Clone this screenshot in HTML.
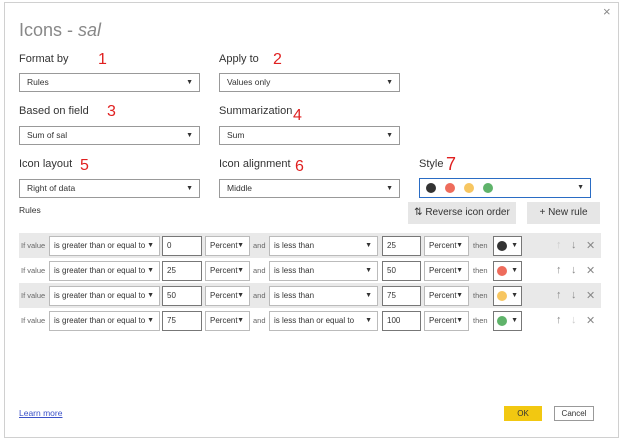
<!DOCTYPE html>
<html><head><meta charset="utf-8">
<style>
*{box-sizing:border-box;margin:0;padding:0}
body{width:624px;height:441px;background:#fff;font-family:"Liberation Sans",sans-serif;position:relative;overflow:hidden;color:#333}
.dlg{position:absolute;left:4px;top:2px;width:615px;height:436px;border:1px solid #d0d0d0;background:#fff}
.a{position:absolute;white-space:nowrap}
.title{left:19px;top:20px;font-size:18px;color:#888;font-weight:300}
.lbl{font-size:11px;color:#333}
.sel{position:absolute;height:19px;border:1px solid #999;background:#fff;font-size:8.5px;line-height:17px;padding-left:7px;color:#333}
.sel .ar{position:absolute;right:6px;top:0;font-size:7px}
.red{position:absolute;color:#e02020;font-family:"Liberation Sans",sans-serif;font-size:16px}
.row{position:absolute;left:19px;width:582px;height:25px}
.g{background:#e9e9e9}
.s{position:absolute;top:3px;height:20px;border:1px solid #bbb;background:#fff;font-size:8px;line-height:18px;padding-left:4px}
.s .ar{position:absolute;right:5px;top:0;font-size:7px}
.in{border-color:#777}
.t{position:absolute;top:8px;font-size:7.5px;color:#666}
.dot{display:inline-block;width:10px;height:10px;border-radius:50%;vertical-align:middle}
.ic{position:absolute;top:6px;font-size:11px;color:#888}
.btn{position:absolute;background:#e6e6e6;font-size:10px;color:#333;text-align:center;line-height:22px}
</style></head><body>
<div class="dlg"></div>
<div class="a" style="left:603px;top:4px;font-size:13px;color:#888">×</div>
<div class="a title">Icons - <i>sal</i></div>

<div class="a lbl" style="left:19px;top:53px">Format by</div>
<div class="red" style="left:98px;top:51px">1</div>
<div class="sel" style="left:19px;top:73px;width:181px">Rules<span class="ar">▼</span></div>
<div class="a lbl" style="left:219px;top:53px">Apply to</div>
<div class="red" style="left:273px;top:51px">2</div>
<div class="sel" style="left:219px;top:73px;width:181px">Values only<span class="ar">▼</span></div>

<div class="a lbl" style="left:19px;top:105px">Based on field</div>
<div class="red" style="left:107px;top:103px">3</div>
<div class="sel" style="left:19px;top:126px;width:181px">Sum of sal<span class="ar">▼</span></div>
<div class="a lbl" style="left:219px;top:105px">Summarization</div>
<div class="red" style="left:293px;top:107px">4</div>
<div class="sel" style="left:219px;top:126px;width:181px">Sum<span class="ar">▼</span></div>

<div class="a lbl" style="left:19px;top:158px">Icon layout</div>
<div class="red" style="left:80px;top:157px">5</div>
<div class="sel" style="left:19px;top:179px;width:181px">Right of data<span class="ar">▼</span></div>
<div class="a lbl" style="left:219px;top:158px">Icon alignment</div>
<div class="red" style="left:295px;top:158px">6</div>
<div class="sel" style="left:219px;top:179px;width:181px">Middle<span class="ar">▼</span></div>

<div class="a lbl" style="left:419px;top:158px">Style</div>
<div class="red" style="left:446px;top:154px;font-size:18px">7</div>
<div class="sel" style="left:419px;top:178px;width:172px;height:20px;border-color:#2a6cc4;padding-left:6px">
<span class="dot" style="background:#333"></span><span class="dot" style="background:#ee6c5c;margin-left:9px"></span><span class="dot" style="background:#f7c661;margin-left:9px"></span><span class="dot" style="background:#5fb36a;margin-left:9px"></span><span class="ar">▼</span></div>
<div class="btn" style="left:408px;top:202px;width:108px">⇅ Reverse icon order</div>
<div class="btn" style="left:527px;top:202px;width:73px">+ New rule</div>

<div class="a" style="left:19px;top:205px;font-size:8.5px;color:#333">Rules</div>

<div class="row g" style="top:233px">
<div class="t" style="left:2px">If value</div>
<div class="s" style="left:30px;width:111px">is greater than or equal to<span class="ar">▼</span></div>
<div class="s in" style="left:143px;width:40px">0</div>
<div class="s" style="left:186px;width:45px">Percent<span class="ar">▼</span></div>
<div class="t" style="left:234px">and</div>
<div class="s" style="left:250px;width:109px">is less than<span class="ar">▼</span></div>
<div class="s in" style="left:363px;width:39px">25</div>
<div class="s" style="left:405px;width:45px">Percent<span class="ar">▼</span></div>
<div class="t" style="left:454px">then</div>
<div class="s in" style="left:474px;width:29px;padding-left:3px"><span class="dot" style="background:#333"></span><span class="ar" style="right:3px">▼</span></div>
<div class="ic" style="left:537px;color:#ccc">↑</div><div class="ic" style="left:552px">↓</div><div class="ic" style="left:567px">✕</div>
</div>
<div class="row" style="top:258px">
<div class="t" style="left:2px">If value</div>
<div class="s" style="left:30px;width:111px">is greater than or equal to<span class="ar">▼</span></div>
<div class="s in" style="left:143px;width:40px">25</div>
<div class="s" style="left:186px;width:45px">Percent<span class="ar">▼</span></div>
<div class="t" style="left:234px">and</div>
<div class="s" style="left:250px;width:109px">is less than<span class="ar">▼</span></div>
<div class="s in" style="left:363px;width:39px">50</div>
<div class="s" style="left:405px;width:45px">Percent<span class="ar">▼</span></div>
<div class="t" style="left:454px">then</div>
<div class="s in" style="left:474px;width:29px;padding-left:3px"><span class="dot" style="background:#ee6c5c"></span><span class="ar" style="right:3px">▼</span></div>
<div class="ic" style="left:537px">↑</div><div class="ic" style="left:552px">↓</div><div class="ic" style="left:567px">✕</div>
</div>
<div class="row g" style="top:283px">
<div class="t" style="left:2px">If value</div>
<div class="s" style="left:30px;width:111px">is greater than or equal to<span class="ar">▼</span></div>
<div class="s in" style="left:143px;width:40px">50</div>
<div class="s" style="left:186px;width:45px">Percent<span class="ar">▼</span></div>
<div class="t" style="left:234px">and</div>
<div class="s" style="left:250px;width:109px">is less than<span class="ar">▼</span></div>
<div class="s in" style="left:363px;width:39px">75</div>
<div class="s" style="left:405px;width:45px">Percent<span class="ar">▼</span></div>
<div class="t" style="left:454px">then</div>
<div class="s in" style="left:474px;width:29px;padding-left:3px"><span class="dot" style="background:#f7c661"></span><span class="ar" style="right:3px">▼</span></div>
<div class="ic" style="left:537px">↑</div><div class="ic" style="left:552px">↓</div><div class="ic" style="left:567px">✕</div>
</div>
<div class="row" style="top:308px">
<div class="t" style="left:2px">If value</div>
<div class="s" style="left:30px;width:111px">is greater than or equal to<span class="ar">▼</span></div>
<div class="s in" style="left:143px;width:40px">75</div>
<div class="s" style="left:186px;width:45px">Percent<span class="ar">▼</span></div>
<div class="t" style="left:234px">and</div>
<div class="s" style="left:250px;width:109px">is less than or equal to<span class="ar">▼</span></div>
<div class="s in" style="left:363px;width:39px">100</div>
<div class="s" style="left:405px;width:45px">Percent<span class="ar">▼</span></div>
<div class="t" style="left:454px">then</div>
<div class="s in" style="left:474px;width:29px;padding-left:3px"><span class="dot" style="background:#5fb36a"></span><span class="ar" style="right:3px">▼</span></div>
<div class="ic" style="left:537px">↑</div><div class="ic" style="left:552px;color:#ccc">↓</div><div class="ic" style="left:567px">✕</div>
</div>

<div class="a" style="left:19px;top:408px;font-size:8.5px;color:#3a50c8;text-decoration:underline">Learn more</div>
<div class="a" style="left:504px;top:406px;width:38px;height:15px;background:#f2c811;font-size:8px;text-align:center;line-height:15px;color:#333">OK</div>
<div class="a" style="left:554px;top:406px;width:40px;height:15px;border:1px solid #999;background:#fff;font-size:8px;text-align:center;line-height:13px;color:#333">Cancel</div>
</body></html>
